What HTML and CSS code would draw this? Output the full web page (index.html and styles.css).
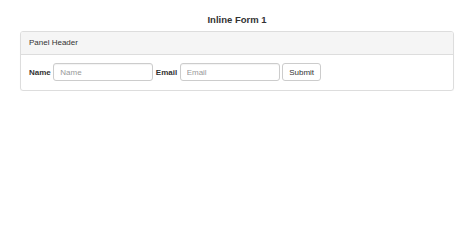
FILE: index.html
```html
<!DOCTYPE html>
<html>
<head>
<meta charset="utf-8">
<title>Inline Form 1</title>
<link rel="stylesheet" href="styles.css">
</head>
<body>
<div class="page">
  <h1 class="title">Inline Form 1</h1>
  <div class="panel">
    <div class="panel-header">Panel Header</div>
    <div class="panel-body">
      <form class="inline-form">
        <label class="label" for="name">Name</label>
        <input class="input" id="name" type="text" placeholder="Name">
        <label class="label" for="email">Email</label>
        <input class="input" id="email" type="email" placeholder="Email">
        <button class="btn" type="button">Submit</button>
      </form>
    </div>
  </div>
</div>
</body>
</html>
```
FILE: styles.css
```css
html, body {
  margin: 0;
  padding: 0;
  background: #fff;
}
body {
  font-family: "Liberation Sans", Arial, Helvetica, sans-serif;
  color: #333;
  font-size: 8px;
}
.page {
  padding: 0 20px;
}
.title {
  margin: 14px 0 5px;
  font-size: 9.5px;
  line-height: 12px;
  font-weight: bold;
  text-align: center;
  color: #333;
}
.panel {
  border: 1px solid #ddd;
  border-radius: 3px;
  box-shadow: 0 1px 1px rgba(0, 0, 0, 0.04);
}
.panel-header {
  background: #f5f5f5;
  border-bottom: 1px solid #ddd;
  border-radius: 2px 2px 0 0;
  padding: 5px 8px 6px;
  font-size: 8px;
  line-height: 11px;
  color: #333;
}
.panel-body {
  padding: 8px 8px 9px;
}
.inline-form {
  display: flex;
  align-items: center;
  gap: 2.5px;
  margin: 0;
}
.label {
  font-weight: bold;
  font-size: 8px;
  color: #333;
}
.input {
  box-sizing: border-box;
  width: 100px;
  height: 18px;
  margin: 0;
  padding: 0 6px;
  border: 1px solid #ccc;
  border-radius: 3px;
  font-family: "Liberation Sans", Arial, Helvetica, sans-serif;
  font-size: 8px;
  color: #555;
  background: #fff;
  box-shadow: inset 0 1px 1px rgba(0, 0, 0, 0.05);
  outline: none;
}
.input::placeholder {
  color: #999;
}
.btn {
  box-sizing: border-box;
  height: 18px;
  margin: 0;
  padding: 0 6px;
  border: 1px solid #ccc;
  border-radius: 3px;
  background: #fff;
  font-family: "Liberation Sans", Arial, Helvetica, sans-serif;
  font-size: 8px;
  color: #333;
  cursor: pointer;
}
```
